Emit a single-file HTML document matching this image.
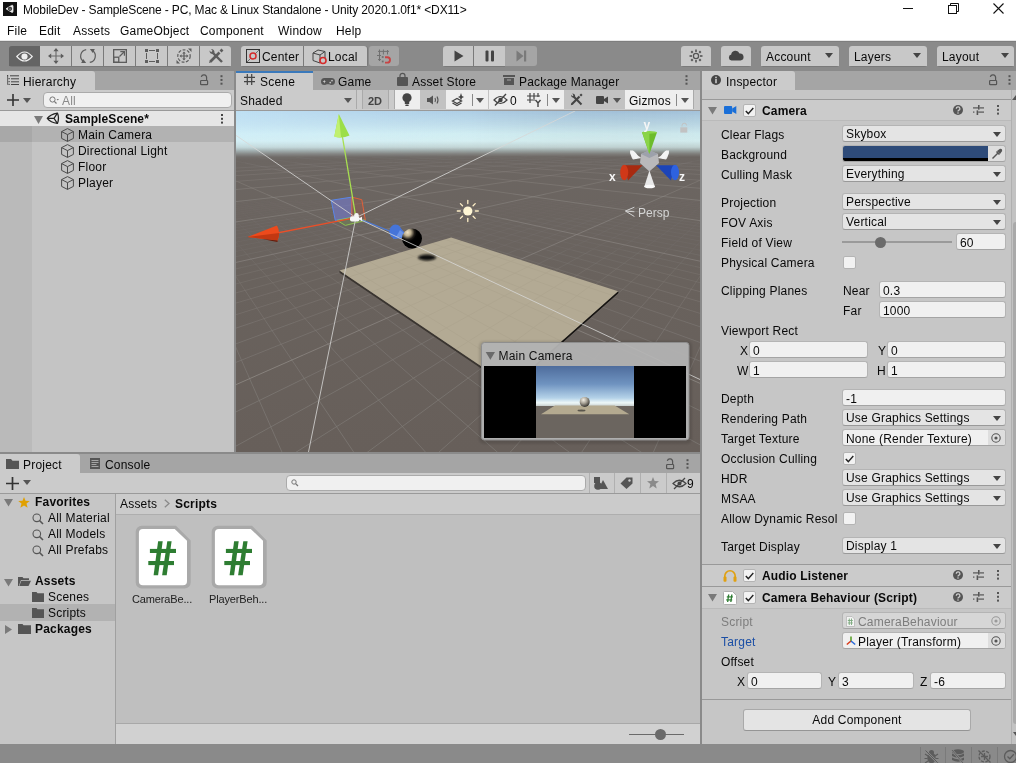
<!DOCTYPE html>
<html><head><meta charset="utf-8">
<style>
*{box-sizing:border-box;margin:0;padding:0}
html,body{width:1016px;height:763px;overflow:hidden;background:#c8c8c8;font-family:"Liberation Sans",sans-serif;font-size:12px;color:#090909}
.a{position:absolute}
.t{position:absolute;white-space:nowrap;line-height:14px;letter-spacing:0.2px;margin-top:1px;will-change:transform}
.b{font-weight:bold}
svg{position:absolute;overflow:visible}
</style></head><body>
<!-- title bar -->
<div class="a" style="left:0;top:0;width:1016px;height:41px;background:#fff"></div>

<!-- title -->
<div class="a" style="left:3px;top:2px;width:14px;height:14px;background:#111"></div>
<svg style="left:3px;top:2px" width="14" height="14" viewBox="0 0 14 14"><path d="M3 6.8 L8.6 3.4 Q10 2.7 10 4.3 V9.3 Q10 10.9 8.6 10.2 Z" fill="#eeeeee" stroke="#eeeeee" stroke-width="0.8" stroke-linejoin="round"/><circle cx="7" cy="6.8" r="2.1" fill="#1a1a1a"/><circle cx="7" cy="6.8" r="1" fill="none" stroke="#8a8a8a" stroke-width="0.8"/></svg>
<div class="t" style="left:23px;top:2px;letter-spacing:-0.15px">MobileDev - SampleScene - PC, Mac &amp; Linux Standalone - Unity 2020.1.0f1* &lt;DX11&gt;</div>
<div class="a" style="left:903px;top:8px;width:10px;height:1px;background:#111"></div>
<svg style="left:946px;top:2px" width="14" height="12" viewBox="0 0 14 12"><rect x="2.5" y="3.5" width="8" height="8" fill="none" stroke="#111"/><path d="M4.5 3.5 V1.5 H12.5 V9.5 H10.5" fill="none" stroke="#111"/></svg>
<svg style="left:993px;top:3px" width="11" height="11" viewBox="0 0 11 11"><path d="M0.5 0.5 L10.5 10.5 M10.5 0.5 L0.5 10.5" stroke="#111" stroke-width="1.1"/></svg>
<!-- menu -->
<div class="t" style="left:7px;top:23px">File</div>
<div class="t" style="left:39px;top:23px">Edit</div>
<div class="t" style="left:73px;top:23px">Assets</div>
<div class="t" style="left:120px;top:23px">GameObject</div>
<div class="t" style="left:200px;top:23px">Component</div>
<div class="t" style="left:278px;top:23px">Window</div>
<div class="t" style="left:336px;top:23px">Help</div>
<div class="a" style="left:0;top:40px;width:1016px;height:1px;background:#e6e6e6"></div>
<!-- toolbar -->
<div class="a" style="left:0;top:41px;width:1016px;height:30px;background:#8a8a8a"></div>

<!-- toolbar buttons -->
<div class="a" style="left:41px;top:0"></div>
<div class="a" style="left:0;top:41px;width:1016px;height:1px;background:#7e7e7e"></div>
<div class="a" style="left:9px;top:46px;width:222px;height:21px;background:#7a7a7a;border-radius:3px"></div>
<div class="a" style="left:9px;top:46px;width:31px;height:20px;background:#646464;border-radius:3px 0 0 0"></div>
<div class="a" style="left:40px;top:46px;width:31px;height:20px;background:#c8c8c8"></div>
<div class="a" style="left:72px;top:46px;width:31px;height:20px;background:#c8c8c8"></div>
<div class="a" style="left:104px;top:46px;width:31px;height:20px;background:#c8c8c8"></div>
<div class="a" style="left:136px;top:46px;width:31px;height:20px;background:#c8c8c8"></div>
<div class="a" style="left:168px;top:46px;width:31px;height:20px;background:#c8c8c8"></div>
<div class="a" style="left:200px;top:46px;width:31px;height:20px;background:#c8c8c8;border-radius:0 3px 0 0"></div>
<svg style="left:16px;top:50px" width="17" height="13" viewBox="0 0 17 13"><path d="M0.8 6.5 Q8.5 -2.5 16.2 6.5 Q8.5 15.5 0.8 6.5 Z" fill="none" stroke="#f0f0f0" stroke-width="1.2"/><circle cx="8.5" cy="6.5" r="3.1" fill="#f0f0f0"/></svg>
<svg style="left:47px;top:47px" width="18" height="18" viewBox="0 0 18 18"><path d="M9 3.5 V14.5 M3.5 9 H14.5" stroke="#6a6a6a" stroke-width="1.1"/><path d="M9 1 L11.6 4.2 H6.4 Z M9 17 L11.6 13.8 H6.4 Z M1 9 L4.2 6.4 V11.6 Z M17 9 L13.8 6.4 V11.6 Z" fill="#5c5c5c"/></svg>
<svg style="left:79px;top:48px" width="18" height="16" viewBox="0 0 18 16"><path d="M7.2 1.6 A6.6 6.6 0 0 0 4.6 13.6" fill="none" stroke="#5c5c5c" stroke-width="1.2"/><path d="M10.8 14.4 A6.6 6.6 0 0 0 13.4 2.4" fill="none" stroke="#5c5c5c" stroke-width="1.2"/><path d="M2.2 15 H7.2 L4.2 11 Z" fill="#5c5c5c"/><path d="M15.8 1 H10.8 L13.8 5 Z" fill="#5c5c5c"/></svg>
<svg style="left:113px;top:49px" width="14" height="14" viewBox="0 0 14 14"><rect x="0.65" y="0.65" width="12.7" height="12.7" fill="none" stroke="#5c5c5c" stroke-width="1.3"/><rect x="0.65" y="8.2" width="5.1" height="5.1" fill="none" stroke="#5c5c5c" stroke-width="1.3"/><path d="M6.5 7.5 L11 3" stroke="#5c5c5c" stroke-width="1.2"/><path d="M7.3 2.6 H11.4 V6.7" fill="none" stroke="#5c5c5c" stroke-width="1.2"/></svg>
<svg style="left:145px;top:49px" width="14" height="14" viewBox="0 0 14 14" fill="#5c5c5c"><rect x="0" y="0" width="3" height="3"/><rect x="11" y="0" width="3" height="3"/><rect x="0" y="11" width="3" height="3"/><rect x="11" y="11" width="3" height="3"/><path d="M4 1.5 H10 M4 12.5 H10 M1.5 4 V10 M12.5 4 V10" stroke="#5c5c5c" stroke-width="1"/></svg>
<svg style="left:176px;top:48px" width="16" height="16" viewBox="0 0 16 16"><circle cx="8" cy="8" r="6.2" fill="none" stroke="#5c5c5c" stroke-width="1.2" stroke-dasharray="3 1.5"/><path d="M8 3.5 L9.8 5.5 H6.2 Z M8 12.5 L9.8 10.5 H6.2 Z M3.5 8 L5.5 6.2 V9.8 Z M12.5 8 L10.5 6.2 V9.8 Z" fill="#5c5c5c"/><path d="M8 5 V11 M5 8 H11" stroke="#5c5c5c" stroke-width="1.2"/><path d="M15.5 0.5 V4 L12 0.5 Z M0.5 15.5 V12 L4 15.5 Z" fill="#5c5c5c"/></svg>
<svg style="left:208px;top:48px" width="16" height="16" viewBox="0 0 16 16"><path d="M2.5 13.5 L11.5 4.5" stroke="#5c5c5c" stroke-width="2.6"/><path d="M1 15 L2 11.8 L4.2 14 Z" fill="#5c5c5c"/><path d="M4.5 4.5 L14 14" stroke="#5c5c5c" stroke-width="2.4"/><path d="M1.5 2.5 Q1.5 6 5 6 L6.5 4.5 Q6.5 1 3 1 L4.5 2.8 L3.2 4.2 Z" fill="#5c5c5c"/><path d="M12.5 1.5 L14.5 3.5" stroke="#5c5c5c" stroke-width="2.6"/></svg>

<!-- center/local -->
<div class="a" style="left:241px;top:46px;width:127px;height:21px;background:#7a7a7a;border-radius:3px"></div>
<div class="a" style="left:241px;top:46px;width:62px;height:20px;background:#c8c8c8;border-radius:3px 0 0 0"></div>
<div class="a" style="left:304px;top:46px;width:63px;height:20px;background:#c8c8c8;border-radius:0 3px 0 0"></div>
<svg style="left:246px;top:49px" width="14" height="14" viewBox="0 0 14 14"><rect x="0.5" y="0.5" width="13" height="13" fill="none" stroke="#333" stroke-width="1"/><path d="M1 13 L13 1" stroke="#555" stroke-width="0.8"/><circle cx="7" cy="7" r="3" fill="#c8c8c8" stroke="#d42a2a" stroke-width="1.5"/></svg>
<div class="t" style="left:262px;top:49px">Center</div>
<svg style="left:312px;top:49px" width="17" height="16" viewBox="0 0 17 16"><path d="M1 4 L6 1 L13 2.5 V10 L8 14 L1 11.5 Z M1 4 L8 6 L13 2.5 M8 6 V14" fill="none" stroke="#444" stroke-width="1"/><circle cx="11" cy="11.5" r="3" fill="#c8c8c8" stroke="#d42a2a" stroke-width="1.6"/></svg>
<div class="t" style="left:328px;top:49px">Local</div>
<div class="a" style="left:369px;top:46px;width:30px;height:20px;background:#a5a5a5;border-radius:3px"></div>
<svg style="left:376px;top:49px" width="16" height="15" viewBox="0 0 16 15"><path d="M3.5 0.5 V12 M7.4 0.5 V5.5 M11.5 1 V5.5 M2 2.4 H13 M1 6.5 H5 M2 10.6 H5" stroke="#707070" stroke-width="1"/><rect x="5.8" y="7.1" width="1.8" height="1.8" fill="#707070"/><rect x="5.8" y="11.6" width="1.8" height="1.8" fill="#707070"/><path d="M9 8.2 H11.3 A2.7 2.7 0 0 1 11.3 13.6 H9" fill="none" stroke="#c84444" stroke-width="1.9"/></svg>

<!-- play -->
<div class="a" style="left:443px;top:46px;width:62px;height:21px;background:#7a7a7a;border-radius:3px 0 0 3px"></div>
<div class="a" style="left:443px;top:46px;width:30px;height:20px;background:#c8c8c8;border-radius:3px 0 0 0"></div>
<div class="a" style="left:474px;top:46px;width:31px;height:20px;background:#c8c8c8"></div>
<div class="a" style="left:505px;top:46px;width:32px;height:20px;background:#a5a5a5;border-radius:0 3px 3px 0"></div>
<svg style="left:454px;top:50px" width="10" height="12" viewBox="0 0 10 12"><path d="M0.5 0.5 L9.5 6 L0.5 11.5 Z" fill="#444"/></svg>
<svg style="left:485px;top:50px" width="10" height="12" viewBox="0 0 10 12"><rect x="0.5" y="0.5" width="3" height="11" rx="1" fill="#444"/><rect x="6" y="0.5" width="3" height="11" rx="1" fill="#444"/></svg>
<svg style="left:516px;top:50px" width="11" height="12" viewBox="0 0 11 12"><path d="M0.5 0.5 L7.5 6 L0.5 11.5 Z" fill="#7a7a7a"/><rect x="8" y="0.5" width="2.2" height="11" fill="#7a7a7a"/></svg>

<!-- right toolbar -->
<div class="a" style="left:681px;top:46px;width:30px;height:21px;background:#7a7a7a;border-radius:3px"></div>
<div class="a" style="left:681px;top:46px;width:30px;height:20px;background:#c8c8c8;border-radius:3px 3px 0 0"></div>
<svg style="left:688px;top:48px" width="16" height="16" viewBox="0 0 16 16" fill="#555"><circle cx="8" cy="8" r="2.6" fill="none" stroke="#555" stroke-width="1.3"/><rect x="7.2" y="1.5" width="1.6" height="2.5"/><rect x="7.2" y="12" width="1.6" height="2.5"/><rect x="1.5" y="7.2" width="2.5" height="1.6"/><rect x="12" y="7.2" width="2.5" height="1.6"/><rect x="3" y="3" width="2" height="2" transform="rotate(45 4 4)"/><rect x="11" y="3" width="2" height="2" transform="rotate(45 12 4)"/><rect x="3" y="11" width="2" height="2" transform="rotate(45 4 12)"/><rect x="11" y="11" width="2" height="2" transform="rotate(45 12 12)"/></svg>
<div class="a" style="left:721px;top:46px;width:30px;height:21px;background:#7a7a7a;border-radius:3px"></div>
<div class="a" style="left:721px;top:46px;width:30px;height:20px;background:#c8c8c8;border-radius:3px 3px 0 0"></div>
<svg style="left:728px;top:50px" width="16" height="11" viewBox="0 0 16 11"><path d="M3.5 10.5 A3 3 0 0 1 3.2 4.6 A4.3 4.3 0 0 1 11.5 3.5 A3.5 3.5 0 0 1 12.5 10.5 Z" fill="#444"/></svg>
<div class="a" style="left:761px;top:46px;width:78px;height:21px;background:#7a7a7a;border-radius:3px"></div>
<div class="a" style="left:761px;top:46px;width:78px;height:20px;background:#c8c8c8;border-radius:3px 3px 0 0"></div>
<div class="t" style="left:766px;top:49px">Account</div>
<svg style="left:825px;top:53px" width="8" height="5" viewBox="0 0 8 5"><path d="M0 0 H8 L4 5 Z" fill="#444"/></svg>
<div class="a" style="left:849px;top:46px;width:78px;height:21px;background:#7a7a7a;border-radius:3px"></div>
<div class="a" style="left:849px;top:46px;width:78px;height:20px;background:#c8c8c8;border-radius:3px 3px 0 0"></div>
<div class="t" style="left:854px;top:49px">Layers</div>
<svg style="left:913px;top:53px" width="8" height="5" viewBox="0 0 8 5"><path d="M0 0 H8 L4 5 Z" fill="#444"/></svg>
<div class="a" style="left:937px;top:46px;width:77px;height:21px;background:#7a7a7a;border-radius:3px"></div>
<div class="a" style="left:937px;top:46px;width:77px;height:20px;background:#c8c8c8;border-radius:3px 3px 0 0"></div>
<div class="t" style="left:942px;top:49px">Layout</div>
<svg style="left:1001px;top:53px" width="8" height="5" viewBox="0 0 8 5"><path d="M0 0 H8 L4 5 Z" fill="#444"/></svg>

<!-- dock tab bars -->
<div class="a" style="left:0;top:71px;width:234px;height:19px;background:#a5a5a5"></div>
<div class="a" style="left:236px;top:71px;width:464px;height:19px;background:#a5a5a5"></div>
<div class="a" style="left:702px;top:71px;width:314px;height:19px;background:#a5a5a5"></div>
<!-- hierarchy tab -->
<div class="a" style="left:0;top:71px;width:95px;height:19px;background:#cbcbcb;border-radius:0 3px 0 0"></div>
<svg style="left:7px;top:75px" width="12" height="10" viewBox="0 0 12 10" fill="#444"><rect x="0" y="0" width="1.2" height="1.2"/><rect x="3" y="0.3" width="9" height="1"/><rect x="1.5" y="3" width="1.2" height="1.2"/><rect x="4" y="3.3" width="8" height="1"/><rect x="1.5" y="6" width="1.2" height="1.2"/><rect x="4" y="6.3" width="8" height="1"/><rect x="1.5" y="8.8" width="1.2" height="1.2"/><rect x="4" y="9" width="8" height="1"/><rect x="0.3" y="1" width="0.8" height="8.8"/></svg>
<div class="t" style="left:23px;top:74px">Hierarchy</div>
<svg style="left:199px;top:74px" width="10" height="12" viewBox="0 0 10 12"><path d="M2.3 2.8 A2.7 2.7 0 0 1 7.6 3.4 V6.3" fill="none" stroke="#555" stroke-width="1.2"/><rect x="1.6" y="6.5" width="7" height="4.2" rx="0.8" fill="none" stroke="#555" stroke-width="1.2"/></svg>
<svg style="left:220px;top:74px" width="3" height="11" viewBox="0 0 3 11" fill="#555"><rect x="0.5" y="1.2" width="2" height="2"/><rect x="0.5" y="4.95" width="2" height="2"/><rect x="0.5" y="8.7" width="2" height="2"/></svg>
<!-- scene tabs -->
<div class="a" style="left:236px;top:71px;width:77px;height:19px;background:#cbcbcb;border-radius:0 3px 0 0"></div>
<div class="a" style="left:236px;top:71px;width:77px;height:2px;background:#3a79bb"></div>
<svg style="left:244px;top:74px" width="11" height="11" viewBox="0 0 11 11"><path d="M3.3 0 V11 M7.7 0 V11 M0 3.3 H11 M0 7.7 H11" stroke="#444" stroke-width="1.2"/></svg>
<div class="t" style="left:260px;top:74px">Scene</div>
<svg style="left:321px;top:78px" width="14" height="7" viewBox="0 0 14 7"><path d="M3.5 0 H10.5 A3.5 3.5 0 0 1 10.5 7 Q9 7 8.2 6.3 H5.8 Q5 7 3.5 7 A3.5 3.5 0 0 1 3.5 0 Z" fill="#555"/><path d="M3.3 1.8 L3.8 3.1 L5 3.6 L3.8 4.1 L3.3 5.4 L2.8 4.1 L1.6 3.6 L2.8 3.1 Z" fill="#c8c8c8"/><circle cx="9.2" cy="4.6" r="0.9" fill="#c0c0c0"/><circle cx="11" cy="2.6" r="0.9" fill="#c0c0c0"/></svg>
<div class="t" style="left:338px;top:74px">Game</div>
<svg style="left:397px;top:73px" width="11" height="13" viewBox="0 0 11 13"><path d="M3 4 V2.8 A2.5 2.5 0 0 1 8 2.8 V4" fill="none" stroke="#555" stroke-width="1.2"/><rect x="0" y="4" width="11" height="9" rx="1" fill="#555"/></svg>
<div class="t" style="left:412px;top:74px">Asset Store</div>
<svg style="left:503px;top:75px" width="12" height="10" viewBox="0 0 12 10" fill="#555"><rect x="0" y="0" width="12" height="2"/><path d="M1 3 H11 V10 H1 Z"/><rect x="4" y="4.5" width="4" height="1" fill="#a5a5a5"/></svg>
<div class="t" style="left:519px;top:74px">Package Manager</div>
<svg style="left:685px;top:74px" width="3" height="11" viewBox="0 0 3 11" fill="#555"><rect x="0.5" y="1.2" width="2" height="2"/><rect x="0.5" y="4.95" width="2" height="2"/><rect x="0.5" y="8.7" width="2" height="2"/></svg>
<!-- inspector tab -->
<div class="a" style="left:702px;top:71px;width:93px;height:19px;background:#cbcbcb;border-radius:0 3px 0 0"></div>
<svg style="left:711px;top:75px" width="10" height="10" viewBox="0 0 10 10"><circle cx="5" cy="5" r="5" fill="#444"/><rect x="4.2" y="4" width="1.6" height="4.2" fill="#cbcbcb"/><circle cx="5" cy="2.4" r="0.9" fill="#cbcbcb"/></svg>
<div class="t" style="left:726px;top:74px">Inspector</div>
<svg style="left:988px;top:74px" width="10" height="12" viewBox="0 0 10 12"><path d="M2.3 2.8 A2.7 2.7 0 0 1 7.6 3.4 V6.3" fill="none" stroke="#555" stroke-width="1.2"/><rect x="1.6" y="6.5" width="7" height="4.2" rx="0.8" fill="none" stroke="#555" stroke-width="1.2"/></svg>
<svg style="left:1008px;top:74px" width="3" height="11" viewBox="0 0 3 11" fill="#555"><rect x="0.5" y="1.2" width="2" height="2"/><rect x="0.5" y="4.95" width="2" height="2"/><rect x="0.5" y="8.7" width="2" height="2"/></svg>

<!-- hierarchy toolbar -->
<div class="a" style="left:0;top:90px;width:234px;height:20px;background:#cbcbcb"></div>
<div class="a" style="left:0;top:110px;width:234px;height:1px;background:#999"></div>
<svg style="left:7px;top:94px" width="12" height="12" viewBox="0 0 12 12"><path d="M6 0 V12 M0 6 H12" stroke="#333" stroke-width="1.6"/></svg>
<svg style="left:23px;top:98px" width="8" height="5" viewBox="0 0 8 5"><path d="M0 0 H8 L4 5 Z" fill="#555"/></svg>
<div class="a" style="left:43px;top:92px;width:189px;height:16px;background:#f0f0f0;border:1px solid #aaaaaa;border-radius:4px"></div>
<svg style="left:49px;top:96px" width="10" height="9" viewBox="0 0 10 9"><circle cx="3.5" cy="3.5" r="2.6" fill="none" stroke="#777" stroke-width="1"/><path d="M5.3 5.3 L7.5 7.5" stroke="#777" stroke-width="1.2"/><path d="M7.5 3 H10 L8.75 4.5 Z" fill="#777"/></svg>
<div class="t" style="left:62px;top:93px;color:#8a8a8a">All</div>

<!-- scene toolbar -->
<div class="a" style="left:236px;top:90px;width:464px;height:20px;background:#cbcbcb"></div>
<div class="a" style="left:236px;top:110px;width:464px;height:1px;background:#999"></div>
<div class="t" style="left:240px;top:93px">Shaded</div>
<svg style="left:344px;top:98px" width="8" height="5" viewBox="0 0 8 5"><path d="M0 0 H8 L4 5 Z" fill="#555"/></svg>
<div class="a" style="left:356px;top:90px;width:1px;height:19px;background:#aaa"></div>
<div class="a" style="left:362px;top:90px;width:1px;height:19px;background:#aaa"></div>
<div class="a" style="left:363px;top:90px;width:25px;height:19px;background:#c2c2c2"></div>
<div class="t b" style="left:368px;top:93px;color:#444;font-size:11px;letter-spacing:0">2D</div>
<div class="a" style="left:388px;top:90px;width:1px;height:19px;background:#aaa"></div>
<div class="a" style="left:394px;top:90px;width:1px;height:19px;background:#aaa"></div>
<div class="a" style="left:395px;top:90px;width:25px;height:19px;background:#eeeeee"></div>
<div class="a" style="left:420px;top:90px;width:26px;height:19px;background:#c2c2c2"></div>
<div class="a" style="left:446px;top:90px;width:42px;height:19px;background:#eeeeee"></div>
<div class="a" style="left:488px;top:90px;width:1px;height:19px;background:#c2c2c2"></div>
<div class="a" style="left:489px;top:90px;width:33px;height:19px;background:#eeeeee"></div>
<div class="a" style="left:522px;top:90px;width:42px;height:19px;background:#eeeeee"></div>
<div class="a" style="left:564px;top:90px;width:26px;height:19px;background:#c2c2c2"></div>
<div class="a" style="left:590px;top:90px;width:35px;height:19px;background:#c2c2c2"></div>
<div class="a" style="left:625px;top:90px;width:68px;height:19px;background:#eeeeee"></div>
<div class="a" style="left:693px;top:90px;width:1px;height:19px;background:#aaa"></div>
<!-- scene toolbar icons -->
<svg style="left:402px;top:93px" width="10" height="14" viewBox="0 0 10 14" fill="#444"><circle cx="5" cy="4.8" r="4.6"/><rect x="2.8" y="8" width="4.4" height="3"/><rect x="3.3" y="11.6" width="3.4" height="1.5" rx="0.7"/></svg>
<svg style="left:427px;top:95px" width="12" height="10" viewBox="0 0 12 10"><path d="M0 3 H2.5 L6 0.5 V9.5 L2.5 7 H0 Z" fill="#555"/><path d="M8 3 Q9 5 8 7 M10 1.5 Q12 5 10 8.5" fill="none" stroke="#555" stroke-width="1.1"/></svg>
<svg style="left:452px;top:93px" width="12" height="13" viewBox="0 0 12 13"><path d="M0.5 8 L5 5.5 L9.5 8 L5 10.5 Z" fill="none" stroke="#444" stroke-width="1.3"/><path d="M0.5 10 L5 12.5 L9.5 10" fill="none" stroke="#444" stroke-width="1.3"/><path d="M9 0 L10 3 L12 4 L10 5 L9 7.5 L8 5 L6 4 L8 3 Z" fill="#444"/></svg>
<div class="a" style="left:472px;top:94px;width:1px;height:12px;background:#888"></div>
<svg style="left:476px;top:98px" width="8" height="5" viewBox="0 0 8 5"><path d="M0 0 H8 L4 5 Z" fill="#555"/></svg>
<svg style="left:493px;top:93px" width="15" height="13" viewBox="0 0 15 13"><path d="M1 7 Q7.5 0 14 7 Q7.5 14 1 7 Z" fill="none" stroke="#444" stroke-width="1.2"/><circle cx="7.5" cy="7" r="2.2" fill="#444"/><path d="M2 12.5 L13 1" stroke="#444" stroke-width="1.4"/></svg>
<div class="t" style="left:510px;top:93px">0</div>
<svg style="left:527px;top:93px" width="15" height="14" viewBox="0 0 15 14"><path d="M3 0 V10 M7 0 V6 M11 0 V4 M0 3 H13 M0 7 H8" stroke="#444" stroke-width="1.2"/><path d="M8.5 7 L11 10 L13.5 7 M11 10 V14" fill="none" stroke="#444" stroke-width="1.4"/></svg>
<div class="a" style="left:547px;top:94px;width:1px;height:12px;background:#888"></div>
<svg style="left:552px;top:98px" width="8" height="5" viewBox="0 0 8 5"><path d="M0 0 H8 L4 5 Z" fill="#555"/></svg>
<svg style="left:570px;top:93px" width="13" height="13" viewBox="0 0 13 13"><path d="M2 11 L9.5 3.5" stroke="#444" stroke-width="2.2"/><path d="M0.8 12.2 L1.5 9.8 L3.2 11.5 Z" fill="#444"/><path d="M3.8 3.8 L11.5 11.5" stroke="#444" stroke-width="2"/><path d="M1 1.8 Q1 4.8 4 4.8 L5.2 3.6 Q5.2 0.6 2.2 0.6 L3.5 2.2 L2.4 3.2 Z" fill="#444"/><path d="M10.3 1.3 L11.8 2.8" stroke="#444" stroke-width="2.2"/></svg>
<svg style="left:596px;top:96px" width="12" height="8" viewBox="0 0 12 8" fill="#444"><rect x="0" y="0" width="8" height="8" rx="1"/><path d="M8 3 L12 0.5 V7.5 L8 5 Z"/></svg>
<svg style="left:613px;top:98px" width="8" height="5" viewBox="0 0 8 5"><path d="M0 0 H8 L4 5 Z" fill="#555"/></svg>
<div class="t" style="left:629px;top:93px">Gizmos</div>
<div class="a" style="left:676px;top:94px;width:1px;height:12px;background:#888"></div>
<svg style="left:681px;top:98px" width="8" height="5" viewBox="0 0 8 5"><path d="M0 0 H8 L4 5 Z" fill="#555"/></svg>

<!-- hierarchy content -->
<div class="a" style="left:32px;top:111px;width:202px;height:341px;background:#c4c4c4"></div>
<div class="a" style="left:0;top:111px;width:32px;height:341px;background:#bababa"></div>
<div class="a" style="left:0;top:111px;width:234px;height:15px;background:#e6e6e6"></div>
<div class="a" style="left:0;top:126px;width:32px;height:16px;background:#a8a8a8"></div>
<div class="a" style="left:32px;top:126px;width:202px;height:16px;background:#b2b2b2"></div>
<svg style="left:34px;top:116px" width="9" height="8" viewBox="0 0 9 8"><path d="M0 0 H9 L4.5 8 Z" fill="#7a7a7a"/></svg>
<svg style="left:46px;top:112px" width="14" height="13" viewBox="0 0 14 13"><path d="M1.3 6.4 Q4.5 2.2 11.4 1.1 Q13.6 6.25 11.4 11.4 Q4.5 10.6 1.3 6.4 Z" fill="none" stroke="#222" stroke-width="1.3" stroke-linejoin="round"/><path d="M1.3 6.4 H8 L11.4 1.1 M8 6.4 L11.4 11.4" fill="none" stroke="#222" stroke-width="1.2"/></svg>
<div class="t b" style="left:65px;top:111px;letter-spacing:0.1px">SampleScene*</div>
<svg style="left:221px;top:114px" width="3" height="11" viewBox="0 0 3 11" fill="#444"><rect x="0" y="0" width="2" height="2"/><rect x="0" y="3.8" width="2" height="2"/><rect x="0" y="7.6" width="2" height="2"/></svg>
<svg style="left:61px;top:128px" width="13" height="14" viewBox="0 0 13 14"><path d="M6.5 0.6 L12.4 3.6 V10.4 L6.5 13.4 L0.6 10.4 V3.6 Z M0.6 3.6 L6.5 6.6 L12.4 3.6 M6.5 6.6 V13.4" fill="none" stroke="#4a4a4a" stroke-width="1" stroke-linejoin="round"/></svg>
<div class="t" style="left:78px;top:127px">Main Camera</div>
<svg style="left:61px;top:144px" width="13" height="14" viewBox="0 0 13 14"><path d="M6.5 0.6 L12.4 3.6 V10.4 L6.5 13.4 L0.6 10.4 V3.6 Z M0.6 3.6 L6.5 6.6 L12.4 3.6 M6.5 6.6 V13.4" fill="none" stroke="#4a4a4a" stroke-width="1" stroke-linejoin="round"/></svg>
<div class="t" style="left:78px;top:143px">Directional Light</div>
<svg style="left:61px;top:160px" width="13" height="14" viewBox="0 0 13 14"><path d="M6.5 0.6 L12.4 3.6 V10.4 L6.5 13.4 L0.6 10.4 V3.6 Z M0.6 3.6 L6.5 6.6 L12.4 3.6 M6.5 6.6 V13.4" fill="none" stroke="#4a4a4a" stroke-width="1" stroke-linejoin="round"/></svg>
<div class="t" style="left:78px;top:159px">Floor</div>
<svg style="left:61px;top:176px" width="13" height="14" viewBox="0 0 13 14"><path d="M6.5 0.6 L12.4 3.6 V10.4 L6.5 13.4 L0.6 10.4 V3.6 Z M0.6 3.6 L6.5 6.6 L12.4 3.6 M6.5 6.6 V13.4" fill="none" stroke="#4a4a4a" stroke-width="1" stroke-linejoin="round"/></svg>
<div class="t" style="left:78px;top:175px">Player</div>
<!-- scene view -->
<svg style="left:236px;top:111px;overflow:hidden;will-change:transform" width="464" height="341" viewBox="236 111 464 341">
<defs>
<linearGradient id="sky" x1="0" y1="111" x2="0" y2="452" gradientUnits="userSpaceOnUse">
<stop offset="0" stop-color="#a9c9e2"/><stop offset="0.038" stop-color="#bedbe9"/><stop offset="0.067" stop-color="#d2eef2"/><stop offset="0.088" stop-color="#d6eff1"/><stop offset="0.106" stop-color="#c2d4d4"/><stop offset="0.117" stop-color="#9aa3a1"/><stop offset="0.126" stop-color="#7f7e7b"/><stop offset="0.135" stop-color="#6c6662"/><stop offset="0.5" stop-color="#69625d"/><stop offset="1" stop-color="#675f5a"/></linearGradient>
<linearGradient id="fade" x1="0" y1="111" x2="0" y2="452" gradientUnits="userSpaceOnUse"><stop offset="0.115" stop-color="#6c6763" stop-opacity="0"/><stop offset="0.13" stop-color="#6c6763" stop-opacity="0.85"/><stop offset="0.2" stop-color="#6c6763" stop-opacity="0.55"/><stop offset="0.45" stop-color="#6c6763" stop-opacity="0.2"/><stop offset="0.7" stop-color="#6c6763" stop-opacity="0"/></linearGradient>
<radialGradient id="ball" cx="0.28" cy="0.2" r="0.55"><stop offset="0" stop-color="#eee0c0"/><stop offset="0.3" stop-color="#bfb192"/><stop offset="0.62" stop-color="#221e19"/><stop offset="0.8" stop-color="#030303"/><stop offset="1" stop-color="#000"/></radialGradient>
<radialGradient id="pball" cx="0.38" cy="0.3" r="0.75"><stop offset="0" stop-color="#f4f0e6"/><stop offset="0.45" stop-color="#aaa498"/><stop offset="1" stop-color="#2a2824"/></radialGradient>
<linearGradient id="psky" x1="0" y1="366" x2="0" y2="406" gradientUnits="userSpaceOnUse"><stop offset="0" stop-color="#4e6c9c"/><stop offset="0.45" stop-color="#6f93c0"/><stop offset="0.8" stop-color="#b4d2e8"/><stop offset="0.92" stop-color="#eef8f8"/><stop offset="1" stop-color="#c8d0d0"/></linearGradient>
<linearGradient id="skyh" x1="236" y1="0" x2="700" y2="0" gradientUnits="userSpaceOnUse"><stop offset="0" stop-color="#cdeeff" stop-opacity="0.6"/><stop offset="0.5" stop-color="#cdeeff" stop-opacity="0.15"/><stop offset="1" stop-color="#000" stop-opacity="0.03"/></linearGradient>
<linearGradient id="skyv" x1="0" y1="111" x2="0" y2="160" gradientUnits="userSpaceOnUse"><stop offset="0" stop-color="#fff"/><stop offset="0.55" stop-color="#fff" stop-opacity="0.6"/><stop offset="1" stop-color="#fff" stop-opacity="0"/></linearGradient>
<mask id="skym"><rect x="236" y="111" width="464" height="50" fill="url(#skyv)"/></mask>
<filter id="blur1"><feGaussianBlur stdDeviation="1.2"/></filter>
<filter id="blur05"><feGaussianBlur stdDeviation="0.5"/></filter>
</defs>
<rect x="236" y="111" width="464" height="341" fill="url(#sky)"/>
<rect x="236" y="111" width="464" height="50" fill="url(#skyh)" mask="url(#skym)"/>
<g stroke-width="1" fill="none">
<path stroke="#7f7a76" stroke-opacity="0.1" d="M200.3 201.1L201.9 200.9M200.2 202.5L215.6 200.9M200.1 204.0L229.4 200.9M200.3 207.3L256.6 200.8M200.2 209.0L270.4 200.8M200.1 210.9L284.1 200.8M200.4 212.8L297.9 200.7M200.3 214.8L311.6 200.7M200.2 217.0L325.4 200.7M205.3 218.6L339.1 200.6M223.2 218.6L352.9 200.6M241.0 218.5L366.7 200.6M276.6 218.4L394.2 200.5M294.5 218.4L407.9 200.5M312.3 218.4L421.7 200.4M330.1 218.3L435.4 200.4M347.9 218.3L449.2 200.4M365.7 218.2L462.9 200.3M383.6 218.2L476.7 200.3M401.4 218.1L490.4 200.3M419.2 218.1L504.2 200.2M454.8 218.0L531.7 200.2M472.6 218.0L545.4 200.1M490.4 217.9L559.2 200.1M508.3 217.9L572.8 200.1M526.1 217.8L586.6 200.1M543.9 217.8L600.3 200.0M561.7 217.8L614.1 200.0M579.5 217.7L627.8 200.0M597.1 217.7L641.6 199.9M200.0 202.3L214.7 218.5M212.5 200.9L232.5 218.5M632.8 217.6L669.1 199.9M226.3 200.9L250.3 218.5M650.6 217.6L682.8 199.8M240.0 200.8L268.1 218.4M668.4 217.5L696.6 199.8M253.8 200.8L285.9 218.4M686.2 217.5L710.3 199.8M267.6 200.8L303.7 218.3M704.0 217.5L724.0 199.7M721.8 217.4L737.8 199.7M295.1 200.7L339.3 218.2M739.6 217.4L740.0 216.8M308.9 200.7L357.1 218.2M322.6 200.7L374.9 218.2M336.4 200.6L392.7 218.1M350.2 200.6L410.5 218.1M363.9 200.6L428.4 218.0M377.7 200.5L446.2 218.0M391.4 200.5L464.0 217.9M405.2 200.5L481.8 217.9M432.7 200.4L517.3 217.8M446.4 200.4L535.1 217.8M460.2 200.3L552.9 217.7M473.9 200.3L570.7 217.7M487.7 200.3L588.8 217.7M501.4 200.2L606.6 217.6M515.2 200.2L624.4 217.6M528.9 200.2L642.2 217.6M542.7 200.1L660.0 217.5M570.4 200.1L695.6 217.4M584.2 200.1L713.4 217.4M597.9 200.0L731.2 217.3M611.7 200.0L739.6 216.1M625.4 200.0L739.8 214.0M639.2 199.9L739.6 211.9M652.9 199.9L739.8 209.9M666.7 199.9L740.0 208.1M680.4 199.8L739.8 206.3M707.9 199.8L739.8 203.1M721.6 199.7L740.0 201.6M735.4 199.7L739.8 200.1"/>
<path stroke="#7f7a76" stroke-opacity="0.2" d="M200.0 219.3L205.3 218.6M200.3 221.7L223.2 218.6M200.2 224.4L241.0 218.5M200.5 230.1L276.6 218.4M200.3 233.3L294.5 218.4M200.2 236.7L312.3 218.4M200.1 240.4L330.1 218.3M200.5 244.4L347.9 218.3M200.3 248.7L365.7 218.2M212.3 251.1L383.6 218.2M237.6 251.0L401.4 218.1M262.9 251.0L419.2 218.1M313.5 250.8L454.8 218.0M338.8 250.8L472.6 218.0M364.1 250.7L490.4 217.9M389.3 250.6L508.3 217.9M414.6 250.6L526.1 217.8M439.9 250.5L543.9 217.8M465.2 250.4L561.7 217.8M490.5 250.4L579.5 217.7M200.0 223.3L218.6 251.0M515.7 250.3L597.1 217.7M214.7 218.5L243.8 250.9M232.5 218.5L269.1 250.8M566.3 250.2L632.8 217.6M250.3 218.5L294.4 250.8M591.5 250.1L650.6 217.6M268.1 218.4L319.6 250.7M616.8 250.1L668.4 217.5M285.9 218.4L344.9 250.6M641.9 250.1L686.2 217.5M303.7 218.3L370.2 250.6M667.2 250.1L704.0 217.5M692.5 250.0L721.8 217.4M339.3 218.2L420.7 250.5M717.7 249.9L739.6 217.4M357.1 218.2L445.9 250.4M374.9 218.2L471.2 250.3M392.7 218.1L496.4 250.3M410.5 218.1L521.7 250.2M428.4 218.0L546.9 250.1M446.2 218.0L572.2 250.1M464.0 217.9L597.4 250.0M481.8 217.9L623.1 250.1M517.3 217.8L673.6 249.9M535.1 217.8L698.9 249.9M552.9 217.7L724.1 249.8M570.7 217.7L739.5 248.0M588.8 217.7L739.8 243.7M606.6 217.6L739.5 239.6M624.4 217.6L739.8 236.0M642.2 217.6L739.6 232.5M660.0 217.5L739.8 229.3M695.6 217.4L739.8 223.5M713.4 217.4L739.6 220.9M731.2 217.3L739.8 218.5"/>
<path stroke="#7f7a76" stroke-opacity="0.3" d="M200.2 253.4L212.3 251.1M200.0 258.6L237.6 251.0M200.5 264.1L262.9 251.0M241.4 267.6L313.5 250.8M270.5 267.5L338.8 250.8M299.6 267.4L364.1 250.7M328.7 267.3L389.3 250.6M357.3 267.4L414.6 250.6M386.4 267.3L439.9 250.5M415.5 267.3L465.2 250.4M200.0 266.3L200.6 267.5M444.7 267.2L490.5 250.4M218.6 251.0L229.7 267.5M473.8 267.1L515.7 250.3M243.8 250.9L258.7 267.4M269.1 250.8L287.8 267.3M532.0 267.0L566.3 250.2M294.4 250.8L316.9 267.2M561.1 266.9L591.5 250.1M319.6 250.7L345.9 267.2M590.2 266.8L616.8 250.1M344.9 250.6L375.2 267.2M619.3 266.8L641.9 250.1M370.2 250.6L404.3 267.2M648.4 266.7L667.2 250.1M677.5 266.6L692.5 250.0M420.7 250.5L462.5 267.0M706.6 266.5L717.7 249.9M445.9 250.4L491.6 266.9M735.7 266.5L740.0 256.7M471.2 250.3L520.7 266.9M496.4 250.3L549.7 266.8M521.7 250.2L578.8 266.7M546.9 250.1L607.9 266.6M572.2 250.1L636.9 266.6M597.4 250.0L666.0 266.5M623.1 250.1L695.0 266.4M673.6 249.9L739.8 263.5M698.9 249.9L739.5 257.8M724.1 249.8L739.8 252.7"/>
<path stroke="#7f7a76" stroke-opacity="0.4" d="M200.1 277.1L241.4 267.6M200.7 284.6L270.5 267.5M211.5 290.3L299.6 267.4M245.8 290.2L328.7 267.3M280.1 290.1L357.3 267.4M314.4 290.0L386.4 267.3M348.7 289.9L415.5 267.3M200.6 267.5L210.5 290.1M383.0 289.8L444.7 267.2M229.7 267.5L244.8 290.0M417.3 289.7L473.8 267.1M258.7 267.4L279.1 289.9M287.8 267.3L313.3 289.8M485.8 289.6L532.0 267.0M316.9 267.2L347.6 289.7M520.1 289.5L561.1 266.9M345.9 267.2L381.8 289.6M554.4 289.4L590.2 266.8M375.2 267.2L416.1 289.6M588.7 289.3L619.3 266.8M404.3 267.2L450.3 289.5M622.9 289.2L648.4 266.7M657.2 289.1L677.5 266.6M462.5 267.0L518.8 289.3M691.4 289.0L706.6 266.5M491.6 266.9L553.0 289.2M725.7 289.0L735.7 266.5M520.7 266.9L587.2 289.1M549.7 266.8L621.4 289.0M578.8 266.7L655.7 288.9M607.9 266.6L689.9 288.9M636.9 266.6L724.1 288.8M666.0 266.5L739.4 284.1M695.0 266.4L739.8 276.6"/>
<path stroke="#7f7a76" stroke-opacity="0.5" d="M200.5 293.1L211.5 290.3M200.3 302.7L245.8 290.2M200.1 313.6L280.1 290.1M211.2 322.5L314.4 290.0M253.0 322.4L348.7 289.9M210.5 290.1L224.7 322.1M294.7 322.3L383.0 289.8M244.8 290.0L266.3 322.0M336.4 322.1L417.3 289.7M279.1 289.9L308.0 321.9M313.3 289.8L349.6 321.8M419.8 321.9L485.8 289.6M347.6 289.7L391.2 321.7M460.9 322.1L520.1 289.5M381.8 289.6L433.3 321.9M502.7 322.0L554.4 289.4M416.1 289.6L475.0 321.8M544.4 321.9L588.7 289.3M450.3 289.5L516.7 321.7M586.1 321.8L622.9 289.2M627.9 321.7L657.2 289.1M518.8 289.3L600.0 321.5M669.6 321.6L691.4 289.0M553.0 289.2L641.7 321.3M711.3 321.5L725.7 289.0M587.2 289.1L683.3 321.2M621.4 289.0L725.0 321.1M655.7 288.9L739.8 313.3M689.9 288.9L739.4 302.3M724.1 288.8L739.8 292.8"/>
<path stroke="#7f7a76" stroke-opacity="0.6" d="M200.8 325.8L211.2 322.5M200.5 340.1L253.0 322.4M224.7 322.1L248.1 375.2M200.2 356.9L294.7 322.3M266.3 322.0L301.9 375.0M202.4 375.8L336.4 322.1M308.0 321.9L355.8 374.9M349.6 321.8L410.1 375.2M310.3 375.5L419.8 321.9M391.2 321.7L464.1 375.1M364.3 375.4L460.9 322.1M433.3 321.9L518.0 374.9M417.4 375.7L502.7 322.0M475.0 321.8L571.9 374.8M471.5 375.6L544.4 321.9M516.7 321.7L625.8 374.6M525.5 375.4L586.1 321.8M579.5 375.3L627.9 321.7M600.0 321.5L733.6 374.4M633.6 375.1L669.6 321.6M641.7 321.3L739.2 356.7M687.6 375.0L711.3 321.5M683.3 321.2L739.8 340.1M725.0 321.1L739.3 325.6"/>
<path stroke="#7f7a76" stroke-opacity="0.7" d="M200.0 403.1L216.1 479.4M248.1 375.2L293.9 479.2M301.9 375.0L371.7 478.9M201.2 376.3L202.4 375.8M355.8 374.9L449.5 478.7M410.1 375.2L527.2 478.5M200.6 429.2L310.3 375.5M464.1 375.1L604.9 478.3M200.2 465.8L364.3 375.4M518.0 374.9L682.6 478.1M253.1 479.3L417.4 375.7M571.9 374.8L738.9 466.1M330.9 479.1L471.5 375.6M625.8 374.6L739.8 430.0M407.5 479.9L525.5 375.4M485.5 479.6L579.5 375.3M733.6 374.4L739.8 376.8M563.4 479.4L633.6 375.1M641.4 479.2L687.6 375.0M719.3 479.0L739.9 382.4"/>
<path stroke="#7f7a76" stroke-opacity="0.8" d="M371.7 478.9L372.4 480.0M449.5 478.7L450.4 479.7M527.2 478.5L528.3 479.5M604.9 478.3L606.3 479.3M682.6 478.1L684.2 479.1M719.1 480.0L719.3 479.0"/>
<path stroke="#8e8985" stroke-opacity="0.1" d="M342.3 162.6L451.1 157.0M392.3 162.4L489.0 156.9M442.3 162.3L526.9 156.9M492.3 162.2L564.8 156.8M542.3 162.1L602.7 156.7M592.2 162.0L640.6 156.6M642.2 161.9L678.4 156.5M692.2 161.7L716.3 156.4M220.4 157.6L244.5 162.8M258.3 157.5L294.6 162.7M296.3 157.4L344.6 162.5M334.2 157.3L394.6 162.4M372.1 157.2L444.6 162.3M410.0 157.1L494.7 162.2M448.0 157.0L544.7 162.1M485.9 157.0L594.8 162.0M523.9 156.9L644.8 161.9"/>
<path stroke="#8e8985" stroke-opacity="0.2" d="M206.1 169.5L342.3 162.6M271.2 169.3L392.3 162.4M336.4 169.2L442.3 162.3M401.4 169.0L492.3 162.2M466.6 168.9L542.3 162.1M531.7 168.7L592.2 162.0M596.9 168.6L642.2 161.9M662.0 168.4L692.2 161.7M727.1 168.3L740.0 162.6M200.0 165.3L209.5 169.4M244.5 162.8L274.7 169.3M294.6 162.7L339.9 169.1M344.6 162.5L405.1 169.0M394.6 162.4L470.3 168.8M444.6 162.3L535.5 168.7M494.7 162.2L600.7 168.5M544.7 162.1L665.8 168.4M594.8 162.0L731.1 168.2M644.8 161.9L739.9 165.8"/>
<path stroke="#8e8985" stroke-opacity="0.3" d="M200.0 169.8L206.1 169.5M200.0 173.3L271.2 169.3M200.1 177.9L336.4 169.2M231.8 181.7L401.4 169.0M325.2 181.5L466.6 168.9M418.7 181.3L531.7 168.7M512.1 181.1L596.9 168.6M605.6 180.9L662.0 168.4M699.0 180.7L727.1 168.3M209.5 169.4L237.6 181.7M274.7 169.3L331.2 181.5M339.9 169.1L424.7 181.3M405.1 169.0L518.2 181.1M470.3 168.8L611.7 180.8M535.5 168.7L705.3 180.6M600.7 168.5L739.9 176.9M665.8 168.4L739.9 172.3M731.1 168.2L739.9 168.7"/>
<path stroke="#8e8985" stroke-opacity="0.4" d="M200.2 184.1L231.8 181.7M200.2 192.7L325.2 181.5M300.8 194.4L418.7 181.3M423.7 194.1L512.1 181.1M546.7 193.8L605.6 180.9M669.7 193.6L699.0 180.7M237.6 181.7L266.9 194.5M331.2 181.5L389.9 194.2M424.7 181.3L513.0 193.9M518.2 181.1L636.0 193.6M611.7 180.8L740.0 191.7M705.3 180.6L739.9 183.1"/>
<path stroke="#8e8985" stroke-opacity="0.5" d="M200.0 205.6L300.8 194.4M253.6 219.3L423.7 194.1M433.6 218.8L546.7 193.8M613.4 218.4L669.7 193.6M266.9 194.5L323.2 219.0M389.9 194.2L503.0 218.6M513.0 193.9L683.0 218.2M636.0 193.6L740.0 204.7"/>
<path stroke="#8e8985" stroke-opacity="0.6" d="M200.1 227.2L253.6 219.3M226.9 264.4L433.6 218.8M510.5 263.7L613.4 218.4M323.2 219.0L425.8 263.8M503.0 218.6L708.9 263.1M683.0 218.2L739.6 226.3"/>
<path stroke="#8e8985" stroke-opacity="0.7" d="M200.3 270.3L226.9 264.4M303.2 355.0L510.5 263.7M425.8 263.8L633.0 354.1M708.9 263.1L739.5 269.7"/>
<path stroke="#8e8985" stroke-opacity="0.8" d="M200.9 400.1L303.2 355.0M633.0 354.1L739.1 400.4"/>
</g>
<!-- floor -->
<polygon points="339.5,270.5 510.8,386.2 618.1,291.3 618.1,293.5 510.8,388.4 339.5,272.7" fill="#3a3530"/>
<polyline points="510.8,387.0 618.1,292.1" fill="none" stroke="#161412" stroke-width="1.7"/>
<polygon points="339.5,270.5 451.2,237.6 618.1,291.3 510.8,386.2" fill="#b3aa94"/>
<g stroke="#9f9782" stroke-width="0.8" fill="none" opacity="0.3">
<line x1="349.8" y1="267.4" x2="522.7" y2="375.7"/>
<line x1="369.2" y1="261.7" x2="543.7" y2="357.2"/>
<line x1="386.9" y1="256.5" x2="561.6" y2="341.3"/>
<line x1="403.2" y1="251.7" x2="577.1" y2="327.6"/>
<line x1="418.3" y1="247.3" x2="590.7" y2="315.6"/>
<line x1="432.2" y1="243.2" x2="602.6" y2="305.0"/>
<line x1="445.1" y1="239.4" x2="613.2" y2="295.6"/>
<line x1="349.0" y1="276.9" x2="462.4" y2="241.2"/>
<line x1="359.6" y1="284.0" x2="474.5" y2="245.1"/>
<line x1="371.3" y1="291.9" x2="487.5" y2="249.3"/>
<line x1="384.3" y1="300.7" x2="501.5" y2="253.8"/>
<line x1="399.0" y1="310.6" x2="516.8" y2="258.7"/>
<line x1="415.5" y1="321.8" x2="533.4" y2="264.1"/>
<line x1="434.4" y1="334.5" x2="551.6" y2="269.9"/>
<line x1="456.0" y1="349.2" x2="571.6" y2="276.3"/>
<line x1="481.2" y1="366.2" x2="593.6" y2="283.4"/>
</g>

<!-- shadow -->
<ellipse cx="427" cy="257.5" rx="9" ry="3" fill="#0a0a0a" filter="url(#blur1)"/>
<!-- gizmo plane handles -->
<polygon points="331.2,200.3 351.8,197.1 351.8,217.4 335.3,220.4" fill="#7175b8" fill-opacity="0.75" stroke="#5a86e8" stroke-width="1"/>
<polygon points="351.8,197.1 361.8,199.7 365.4,220.4 351.8,217.4" fill="#8a5e50" fill-opacity="0.6" stroke="#e0603a" stroke-width="1"/>
<polygon points="337,220.4 351.8,217.4 365.4,220.4 345.3,225.4" fill="#6f7a58" fill-opacity="0.7" stroke="#8cc050" stroke-width="1"/>
<!-- axes -->
<line x1="355.9" y1="217.6" x2="342.3" y2="136" stroke="#a8e050" stroke-width="1.3"/>
<line x1="355.9" y1="217.6" x2="277" y2="233" stroke="#e8502a" stroke-width="1.3"/>
<line x1="355.9" y1="217.6" x2="392" y2="232" stroke="#4a78d8" stroke-width="1.3"/>
<path d="M338.8,114 L349.5,135.5 Q342,139 334.3,136.5 Z" fill="#9cde48"/>
<path d="M338.8,114 L341,137.5 Q336,137.5 334.3,136.5 Z" fill="#c0f070"/>
<path d="M247.5,237 L277,225.5 Q281,233 277.5,240.5 Z" fill="#ec4a1c"/>
<path d="M247.5,237 L277.5,240.5 Q279.5,236 279,233 Z" fill="#c23812"/>
<path d="M262,239 L277.5,240.5 L277.5,242 Z" fill="#6a1a08"/>
<path d="M409,237.5 L397.5,224.8 L393,239 Z" fill="#4a7ade"/>
<ellipse cx="395.5" cy="231.6" rx="6.3" ry="7" fill="#4574d8"/>
<path d="M409,237.5 L400,230 L396,237 Z" fill="#6a94ea"/>
<!-- ball -->
<circle cx="412" cy="238.5" r="10" fill="url(#ball)"/>
<!-- frustum lines -->
<g stroke="#d8d8d6" stroke-width="0.9" stroke-opacity="0.9" fill="none">
<line x1="236" y1="135.4" x2="355.9" y2="217.6"/>
<line x1="355.9" y1="217.6" x2="575" y2="111"/>
<line x1="355.9" y1="217.6" x2="308.5" y2="452"/>
<line x1="355.9" y1="217.6" x2="700" y2="379.5"/>
</g>
<!-- camera icon -->
<rect x="350" y="216.2" width="9.5" height="5.3" rx="2" fill="#f6f6f6"/>
<circle cx="356.5" cy="215.3" r="2.3" fill="#f6f6f6"/>
<path d="M358.5,218.5 L362,216.8 V221.3 Z" fill="#f6f6f6"/>
<!-- sun -->
<g stroke="#fff0c8" stroke-width="1.3" stroke-linecap="round">
<line x1="467.8" y1="200.5" x2="467.8" y2="203.5"/><line x1="467.8" y1="218.5" x2="467.8" y2="221.5"/>
<line x1="457.3" y1="211" x2="460.3" y2="211"/><line x1="475.3" y1="211" x2="478.3" y2="211"/>
<line x1="460.4" y1="203.6" x2="462.5" y2="205.7"/><line x1="473.1" y1="216.3" x2="475.2" y2="218.4"/>
<line x1="475.2" y1="203.6" x2="473.1" y2="205.7"/><line x1="462.5" y1="216.3" x2="460.4" y2="218.4"/>
</g>
<circle cx="467.8" cy="211" r="4.6" fill="#fff6d4"/>
<!-- scene orientation gizmo -->
<path d="M630,150 Q631,158 633,159.5 L641.5,158 Z" fill="#eeeeee"/>
<ellipse cx="634" cy="154.5" rx="2.5" ry="5" transform="rotate(-40 634 154.5)" fill="#f4f4f4"/>
<path d="M669.2,150 Q668,158 666,159.5 L657.5,158 Z" fill="#eeeeee"/>
<ellipse cx="665" cy="154.5" rx="2.5" ry="5" transform="rotate(40 665 154.5)" fill="#f4f4f4"/>
<path d="M644.2,187 L649.4,170.5 L655,187 Z" fill="#e8e8e8"/>
<ellipse cx="649.6" cy="186.5" rx="5.4" ry="1.8" fill="#fafafa"/>
<path d="M641,154 L649.4,150.5 L658,154 L659,163 L649.4,171.5 L640,163 Z" fill="#b9b9bb"/>
<path d="M641,154 L649.4,150.5 L658,154 L649.4,158 Z" fill="#9da1ab"/>
<path d="M642,132.2 L657,132.2 L649.4,154 Z" fill="#6cbc2c"/>
<path d="M642,132.2 L649.4,132.2 L649.4,154 Z" fill="#8ad448"/>
<ellipse cx="649.5" cy="132.4" rx="7.5" ry="1.3" fill="#8ad448"/>
<path d="M624.5,165.3 L642.5,165.3 L628,180.6 Z" fill="#a82a10"/>
<ellipse cx="624.2" cy="172.5" rx="4" ry="7.8" fill="#d03818"/>
<path d="M656.1,165.3 L674.5,165.3 L671,180.6 Z" fill="#1c44b8"/>
<ellipse cx="675" cy="172.5" rx="4" ry="7.8" fill="#2e62e0"/>
<text x="643.5" y="128.5" font-family="Liberation Sans" font-size="12" font-weight="bold" fill="#f6f6f6">y</text>
<text x="609" y="180.5" font-family="Liberation Sans" font-size="12" font-weight="bold" fill="#f6f6f6">x</text>
<text x="679" y="180.5" font-family="Liberation Sans" font-size="12" font-weight="bold" fill="#f6f6f6">z</text>
<path d="M682,126.5 V125.5 A2.3 2.3 0 0 1 686.6 125.5" fill="none" stroke="#c2c2c2" stroke-width="1"/>
<rect x="680.3" y="127.3" width="7" height="5.3" fill="#c2c2c2"/>
<!-- persp label -->
<path d="M634.4,207.2 L625.5,211 L634.4,216.5 M625.5,211 L634.4,211.8" fill="none" stroke="#d4d4d4" stroke-width="1"/>
<text x="638" y="216.5" font-family="Liberation Sans" font-size="12" fill="#d4d4d4">Persp</text>
<!-- preview window -->
<rect x="479" y="341" width="213" height="103" rx="5" fill="#000" fill-opacity="0.12" filter="url(#blur1)"/>
<rect x="481.5" y="342.5" width="207.5" height="97.5" rx="3" fill="#b3b3b3" fill-opacity="0.95" stroke="#8e8e8e" stroke-width="1"/>
<path d="M485.7,352 H495 L490.35,359.7 Z" fill="#6a6a6a"/>
<text x="498.5" y="360.2" font-family="Liberation Sans" font-size="12" letter-spacing="0.2" fill="#111">Main Camera</text>
<rect x="484" y="366" width="202" height="72" fill="#000"/>
<rect x="536" y="366" width="98" height="72" fill="#6b655f"/>
<rect x="536" y="366" width="98" height="40" fill="url(#psky)"/>
<polygon points="555,405.6 614.6,405.6 629.3,414.2 541,414.2" fill="#b4aa90"/>
<ellipse cx="581.5" cy="410.5" rx="4" ry="1.1" fill="#222" fill-opacity="0.6" filter="url(#blur05)"/>
<circle cx="584.7" cy="401.9" r="5" fill="url(#pball)"/>
</svg>
<!-- /scene view -->

<!-- project panel -->
<div class="a" style="left:0;top:454px;width:700px;height:19px;background:#a5a5a5"></div>
<div class="a" style="left:0;top:454px;width:80px;height:19px;background:#cbcbcb;border-radius:0 3px 0 0"></div>
<svg style="left:6px;top:459px" width="13" height="10" viewBox="0 0 13 10"><path d="M0 0 H5 L6.5 1.8 H13 V10 H0 Z" fill="#555"/></svg>
<div class="t" style="left:23px;top:457px">Project</div>
<svg style="left:90px;top:458px" width="10" height="11" viewBox="0 0 10 11"><rect x="0" y="0" width="10" height="11" fill="#555"/><path d="M1.5 2.5 H8.5 M1.5 4.5 H8.5 M1.5 6.5 H6.5 M1.5 8.5 H8.5" stroke="#a5a5a5" stroke-width="1"/></svg>
<div class="t" style="left:105px;top:457px">Console</div>
<svg style="left:665px;top:458px" width="10" height="12" viewBox="0 0 10 12"><path d="M2.3 2.8 A2.7 2.7 0 0 1 7.6 3.4 V6.3" fill="none" stroke="#555" stroke-width="1.2"/><rect x="1.6" y="6.5" width="7" height="4.2" rx="0.8" fill="none" stroke="#555" stroke-width="1.2"/></svg>
<svg style="left:686px;top:458px" width="3" height="11" viewBox="0 0 3 11" fill="#555"><rect x="0.5" y="1.2" width="2" height="2"/><rect x="0.5" y="4.95" width="2" height="2"/><rect x="0.5" y="8.7" width="2" height="2"/></svg>
<!-- project toolbar -->
<div class="a" style="left:0;top:473px;width:700px;height:20px;background:#cbcbcb"></div>
<div class="a" style="left:0;top:493px;width:700px;height:1px;background:#9a9a9a"></div>
<svg style="left:6px;top:477px" width="13" height="13" viewBox="0 0 13 13"><path d="M6.5 0 V13 M0 6.5 H13" stroke="#333" stroke-width="1.7"/></svg>
<svg style="left:23px;top:480px" width="8" height="5" viewBox="0 0 8 5"><path d="M0 0 H8 L4 5 Z" fill="#555"/></svg>
<div class="a" style="left:286px;top:475px;width:300px;height:16px;background:#f0f0f0;border:1px solid #aaaaaa;border-radius:4px"></div>
<svg style="left:291px;top:479px" width="8" height="8" viewBox="0 0 8 8"><circle cx="3" cy="3" r="2.2" fill="none" stroke="#777" stroke-width="1"/><path d="M4.6 4.6 L7 7" stroke="#777" stroke-width="1.3"/></svg>
<div class="a" style="left:589px;top:473px;width:1px;height:20px;background:#b0b0b0"></div>
<div class="a" style="left:614px;top:473px;width:1px;height:20px;background:#b0b0b0"></div>
<div class="a" style="left:640px;top:473px;width:1px;height:20px;background:#b0b0b0"></div>
<div class="a" style="left:666px;top:473px;width:1px;height:20px;background:#b0b0b0"></div>
<svg style="left:594px;top:477px" width="14" height="13" viewBox="0 0 14 13" fill="#555"><rect x="0" y="0" width="6" height="6"/><circle cx="4" cy="9" r="3.8"/><path d="M9 3 L14 12 H4.5 Z"/></svg>
<svg style="left:620px;top:477px" width="13" height="12" viewBox="0 0 13 12"><path d="M0.5 6.5 L6.5 0.5 H12.5 V6.5 L6.5 12 Z" fill="#555"/><circle cx="9.5" cy="3.5" r="1.2" fill="#cbcbcb"/></svg>
<svg style="left:647px;top:477px" width="12" height="12" viewBox="0 0 12 12"><path d="M6 0 L7.6 4 L12 4.2 L8.6 7 L9.7 11.5 L6 9 L2.3 11.5 L3.4 7 L0 4.2 L4.4 4 Z" fill="#8a8a8a"/></svg>
<svg style="left:672px;top:477px" width="15" height="13" viewBox="0 0 15 13"><path d="M1 6.5 Q7.5 0 14 6.5 Q7.5 13 1 6.5 Z" fill="none" stroke="#444" stroke-width="1.2"/><circle cx="7.5" cy="6.5" r="2" fill="#444"/><path d="M2 12 L13 1" stroke="#444" stroke-width="1.3"/></svg>
<div class="t" style="left:687px;top:476px">9</div>
<!-- project tree -->
<div class="a" style="left:0;top:494px;width:115px;height:250px;background:#c6c6c6"></div>
<div class="a" style="left:115px;top:494px;width:1px;height:250px;background:#a0a0a0"></div>
<div class="a" style="left:0;top:604px;width:115px;height:17px;background:#b2b2b2"></div>
<svg style="left:4px;top:499px" width="9" height="8" viewBox="0 0 9 8"><path d="M0 0 H9 L4.5 7.5 Z" fill="#7a7a7a"/></svg>
<svg style="left:18px;top:497px" width="12" height="11" viewBox="0 0 12 11"><path d="M6 0 L7.5 3.8 L11.8 4 L8.5 6.6 L9.6 10.8 L6 8.4 L2.4 10.8 L3.5 6.6 L0.2 4 L4.5 3.8 Z" fill="#e0a000"/></svg>
<div class="t b" style="left:35px;top:494px">Favorites</div>
<svg style="left:32px;top:513px" width="12" height="12" viewBox="0 0 12 12"><circle cx="4.8" cy="4.8" r="3.8" fill="none" stroke="#555" stroke-width="1.1"/><path d="M7.5 7.5 L11 11" stroke="#555" stroke-width="1.6"/></svg>
<div class="t" style="left:48px;top:510px">All Material</div>
<svg style="left:32px;top:529px" width="12" height="12" viewBox="0 0 12 12"><circle cx="4.8" cy="4.8" r="3.8" fill="none" stroke="#555" stroke-width="1.1"/><path d="M7.5 7.5 L11 11" stroke="#555" stroke-width="1.6"/></svg>
<div class="t" style="left:48px;top:526px">All Models</div>
<svg style="left:32px;top:545px" width="12" height="12" viewBox="0 0 12 12"><circle cx="4.8" cy="4.8" r="3.8" fill="none" stroke="#555" stroke-width="1.1"/><path d="M7.5 7.5 L11 11" stroke="#555" stroke-width="1.6"/></svg>
<div class="t" style="left:48px;top:542px">All Prefabs</div>
<svg style="left:4px;top:579px" width="9" height="8" viewBox="0 0 9 8"><path d="M0 0 H9 L4.5 7.5 Z" fill="#7a7a7a"/></svg>
<svg style="left:18px;top:577px" width="13" height="9" viewBox="0 0 13 9"><path d="M0 0 H4.5 L5.5 1.3 H11 V3 H3 L0.8 9 H0 Z" fill="#555"/><path d="M3.3 3.8 H13 L10.5 9 H1.3 Z" fill="#555"/></svg>
<div class="t b" style="left:35px;top:573px">Assets</div>
<svg style="left:32px;top:592px" width="12" height="10" viewBox="0 0 12 10"><path d="M0 0 H4.5 L5.5 1.3 H12 V10 H0 Z" fill="#555"/></svg>
<div class="t" style="left:48px;top:589px">Scenes</div>
<svg style="left:32px;top:608px" width="12" height="10" viewBox="0 0 12 10"><path d="M0 0 H4.5 L5.5 1.3 H12 V10 H0 Z" fill="#555"/></svg>
<div class="t" style="left:48px;top:605px">Scripts</div>
<svg style="left:5px;top:625px" width="7" height="9" viewBox="0 0 7 9"><path d="M0 0 V9 L7 4.5 Z" fill="#7a7a7a"/></svg>
<svg style="left:18px;top:624px" width="13" height="10" viewBox="0 0 13 10"><path d="M0 0 H4.5 L5.5 1.3 H13 V10 H0 Z" fill="#555"/></svg>
<div class="t b" style="left:35px;top:621px">Packages</div>
<!-- project grid -->
<div class="a" style="left:116px;top:494px;width:584px;height:20px;background:#cbcbcb"></div>
<div class="a" style="left:116px;top:514px;width:584px;height:1px;background:#aeaeae"></div>
<div class="a" style="left:116px;top:515px;width:584px;height:208px;background:#bfbfbf"></div>
<div class="t" style="left:120px;top:496px">Assets</div>
<svg style="left:164px;top:499px" width="6" height="9" viewBox="0 0 6 9"><path d="M0.8 0.8 L5 4.5 L0.8 8.2" fill="none" stroke="#8a8a8a" stroke-width="1.3"/></svg>
<div class="t b" style="left:175px;top:496px">Scripts</div>
<svg style="left:134px;top:524px" width="58" height="66" viewBox="0 0 58 66"><path d="M7.7 1.7 H42 L56.7 16.4 V58.5 A6 6 0 0 1 50.7 64.5 H7.7 A6 6 0 0 1 1.7 58.5 V7.7 A6 6 0 0 1 7.7 1.7 Z" fill="#a9a9a9"/><path d="M8.9 4.9 H40.7 L53 16.8 V57.3 A4 4 0 0 1 49 61.3 H8.9 A4 4 0 0 1 4.9 57.3 V8.9 A4 4 0 0 1 8.9 4.9 Z" fill="#fff"/><g fill="#2e7d32"><path d="M24.1 17.3 H28.7 L24.1 51.2 H19.6 Z"/><path d="M33.3 17.3 H37.6 L32.7 51.2 H28.1 Z"/><rect x="15.9" y="24.9" width="26.1" height="4.1"/><rect x="14.3" y="37" width="25.7" height="4.1"/></g></svg>
<div class="t" style="left:132px;top:591px;font-size:11px;letter-spacing:-0.15px;color:#222">CameraBe...</div>
<svg style="left:210px;top:524px" width="58" height="66" viewBox="0 0 58 66"><path d="M7.7 1.7 H42 L56.7 16.4 V58.5 A6 6 0 0 1 50.7 64.5 H7.7 A6 6 0 0 1 1.7 58.5 V7.7 A6 6 0 0 1 7.7 1.7 Z" fill="#a9a9a9"/><path d="M8.9 4.9 H40.7 L53 16.8 V57.3 A4 4 0 0 1 49 61.3 H8.9 A4 4 0 0 1 4.9 57.3 V8.9 A4 4 0 0 1 8.9 4.9 Z" fill="#fff"/><g fill="#2e7d32"><path d="M24.1 17.3 H28.7 L24.1 51.2 H19.6 Z"/><path d="M33.3 17.3 H37.6 L32.7 51.2 H28.1 Z"/><rect x="15.9" y="24.9" width="26.1" height="4.1"/><rect x="14.3" y="37" width="25.7" height="4.1"/></g></svg>
<div class="t" style="left:209px;top:591px;font-size:11px;letter-spacing:-0.15px;color:#222">PlayerBeh...</div>

<div class="a" style="left:116px;top:723px;width:584px;height:21px;background:#d1d1d1;border-top:1px solid #a8a8a8"></div>
<div class="a" style="left:629px;top:734px;width:55px;height:1px;background:#6a6a6a"></div>
<div class="a" style="left:655px;top:729px;width:11px;height:11px;border-radius:50%;background:#6a6a6a"></div>
<!-- inspector -->
<div class="a" style="left:702px;top:90px;width:314px;height:654px;background:#c6c6c6"></div>
<div class="a" style="left:1011px;top:90px;width:5px;height:654px;background:#c2c2c2;border-left:1px solid #b0b0b0"></div>
<svg style="left:1012px;top:95px" width="4" height="5" viewBox="0 0 4 5"><path d="M0 5 L4 0 V5 Z" fill="#555"/></svg>
<div class="a" style="left:1013px;top:222px;width:3px;height:502px;background:#a9a9a9;border-radius:3px 0 0 3px"></div>
<svg style="left:1013px;top:732px" width="3" height="5" viewBox="0 0 3 5"><path d="M0 0 H3 V4 Z" fill="#555"/></svg>
<div class="a" style="left:702px;top:100px;width:309px;height:20px;background:#cbcbcb"></div>
<div class="a" style="left:702px;top:99px;width:309px;height:1px;background:#999"></div>
<div class="a" style="left:702px;top:120px;width:309px;height:1px;background:#bababa"></div>
<svg style="left:708px;top:107px" width="9" height="8" viewBox="0 0 9 8"><path d="M0 0 H9 L4.5 7.5 Z" fill="#7a7a7a"/></svg>
<svg style="left:724px;top:106px" width="13" height="8" viewBox="0 0 13 8" fill="#1a6fd8"><rect x="0" y="0" width="8.2" height="8" rx="1"/><path d="M8.2 2.5 L12.3 0 V8 L8.2 5.5 Z"/></svg>
<div class="a" style="left:743px;top:104px;width:13px;height:13px;background:#f2f2f2;border:1px solid #b4b4b4;border-radius:2px"></div>
<svg style="left:745px;top:107px" width="9" height="8" viewBox="0 0 9 8"><path d="M0.8 4 L3.3 6.6 L8.3 1" fill="none" stroke="#222" stroke-width="1.4"/></svg>
<div class="t b" style="left:762px;top:103px;letter-spacing:0.15px">Camera</div>
<svg style="left:953px;top:105px" width="10" height="10" viewBox="0 0 10 10"><circle cx="5" cy="5" r="5" fill="#555"/><path d="M3.3 3.8 A1.8 1.8 0 1 1 5.6 5.4 Q5 5.7 5 6.5" fill="none" stroke="#cbcbcb" stroke-width="1.3"/><circle cx="5" cy="8" r="0.8" fill="#cbcbcb"/></svg>
<svg style="left:973px;top:105px" width="11" height="10" viewBox="0 0 11 10" fill="#555"><rect x="0" y="2.3" width="5" height="1.2"/><rect x="5" y="0" width="1.6" height="4.6"/><rect x="6.6" y="2.3" width="4.4" height="1.2"/><rect x="0" y="6.5" width="1.4" height="1.2"/><rect x="3.6" y="5.4" width="1.6" height="4.6"/><rect x="5.2" y="6.5" width="5.8" height="1.2"/></svg>
<svg style="left:997px;top:105px" width="3" height="10" viewBox="0 0 3 10" fill="#555"><rect x="0" y="0" width="2" height="2"/><rect x="0" y="3.8" width="2" height="2"/><rect x="0" y="7.6" width="2" height="2"/></svg>
<div class="t" style="left:721px;top:127px;">Clear Flags</div>
<div class="a" style="left:842px;top:125px;width:164px;height:17px;background:#e4e4e4;border:1px solid #b4b4b4;border-bottom-color:#999;border-radius:3px"></div>
<div class="t" style="left:846px;top:126px">Skybox</div>
<svg style="left:993px;top:132px" width="8" height="5" viewBox="0 0 8 5"><path d="M0 0 H8 L4 5 Z" fill="#444"/></svg>
<div class="t" style="left:721px;top:147px;">Background</div>
<div class="a" style="left:842px;top:145px;width:164px;height:17px;background:#dedede;border:1px solid #b4b4b4;border-bottom-color:#a4a4a4;border-radius:3px;overflow:hidden"><div class="a" style="left:0;top:0;width:145px;height:12px;background:#2e4b79"></div><div class="a" style="left:0;top:12px;width:145px;height:3px;background:#000"></div></div>
<svg style="left:991px;top:148px" width="12" height="12" viewBox="0 0 12 12"><path d="M1.5 10.5 L7 5" stroke="#555" stroke-width="1.5"/><path d="M6 3 L9 0.8 Q11.5 0.5 11.2 3 L9 6 Z" fill="#555"/><path d="M5.5 3.5 L8.5 6.5" stroke="#555" stroke-width="1.6"/></svg>
<div class="t" style="left:721px;top:167px;">Culling Mask</div>
<div class="a" style="left:842px;top:165px;width:164px;height:17px;background:#e4e4e4;border:1px solid #b4b4b4;border-bottom-color:#999;border-radius:3px"></div>
<div class="t" style="left:846px;top:166px">Everything</div>
<svg style="left:993px;top:172px" width="8" height="5" viewBox="0 0 8 5"><path d="M0 0 H8 L4 5 Z" fill="#444"/></svg>
<div class="t" style="left:721px;top:195px;">Projection</div>
<div class="a" style="left:842px;top:193px;width:164px;height:17px;background:#e4e4e4;border:1px solid #b4b4b4;border-bottom-color:#999;border-radius:3px"></div>
<div class="t" style="left:846px;top:194px">Perspective</div>
<svg style="left:993px;top:200px" width="8" height="5" viewBox="0 0 8 5"><path d="M0 0 H8 L4 5 Z" fill="#444"/></svg>
<div class="t" style="left:721px;top:215px;">FOV Axis</div>
<div class="a" style="left:842px;top:213px;width:164px;height:17px;background:#e4e4e4;border:1px solid #b4b4b4;border-bottom-color:#999;border-radius:3px"></div>
<div class="t" style="left:846px;top:214px">Vertical</div>
<svg style="left:993px;top:220px" width="8" height="5" viewBox="0 0 8 5"><path d="M0 0 H8 L4 5 Z" fill="#444"/></svg>
<div class="t" style="left:721px;top:235px;">Field of View</div>
<div class="a" style="left:842px;top:241px;width:110px;height:2px;background:#9a9a9a"></div>
<div class="a" style="left:875px;top:237px;width:11px;height:11px;border-radius:50%;background:#6b6b6b"></div>
<div class="a" style="left:956px;top:233px;width:50px;height:17px;background:#f0f0f0;border:1px solid #b4b4b4;border-bottom-color:#a4a4a4;border-radius:3px"></div>
<div class="t" style="left:960px;top:235px">60</div>
<div class="t" style="left:721px;top:255px;">Physical Camera</div>
<div class="a" style="left:843px;top:256px;width:13px;height:13px;background:#f2f2f2;border:1px solid #b4b4b4;border-radius:2px"></div>
<div class="t" style="left:721px;top:283px;">Clipping Planes</div>
<div class="t" style="left:843px;top:283px;">Near</div>
<div class="a" style="left:879px;top:281px;width:127px;height:17px;background:#f0f0f0;border:1px solid #b4b4b4;border-bottom-color:#a4a4a4;border-radius:3px"></div>
<div class="t" style="left:883px;top:283px">0.3</div>
<div class="t" style="left:843px;top:303px;">Far</div>
<div class="a" style="left:879px;top:301px;width:127px;height:17px;background:#f0f0f0;border:1px solid #b4b4b4;border-bottom-color:#a4a4a4;border-radius:3px"></div>
<div class="t" style="left:883px;top:303px">1000</div>
<div class="t" style="left:721px;top:323px;">Viewport Rect</div>
<div class="t" style="left:740px;top:343px;">X</div>
<div class="a" style="left:749px;top:341px;width:119px;height:17px;background:#f0f0f0;border:1px solid #b4b4b4;border-bottom-color:#a4a4a4;border-radius:3px"></div>
<div class="t" style="left:753px;top:343px">0</div>
<div class="t" style="left:878px;top:343px;">Y</div>
<div class="a" style="left:887px;top:341px;width:119px;height:17px;background:#f0f0f0;border:1px solid #b4b4b4;border-bottom-color:#a4a4a4;border-radius:3px"></div>
<div class="t" style="left:891px;top:343px">0</div>
<div class="t" style="left:737px;top:363px;">W</div>
<div class="a" style="left:749px;top:361px;width:119px;height:17px;background:#f0f0f0;border:1px solid #b4b4b4;border-bottom-color:#a4a4a4;border-radius:3px"></div>
<div class="t" style="left:753px;top:363px">1</div>
<div class="t" style="left:877px;top:363px;">H</div>
<div class="a" style="left:887px;top:361px;width:119px;height:17px;background:#f0f0f0;border:1px solid #b4b4b4;border-bottom-color:#a4a4a4;border-radius:3px"></div>
<div class="t" style="left:891px;top:363px">1</div>
<div class="t" style="left:721px;top:391px;">Depth</div>
<div class="a" style="left:842px;top:389px;width:164px;height:17px;background:#f0f0f0;border:1px solid #b4b4b4;border-bottom-color:#a4a4a4;border-radius:3px"></div>
<div class="t" style="left:846px;top:391px">-1</div>
<div class="t" style="left:721px;top:411px;">Rendering Path</div>
<div class="a" style="left:842px;top:409px;width:164px;height:17px;background:#e4e4e4;border:1px solid #b4b4b4;border-bottom-color:#999;border-radius:3px"></div>
<div class="t" style="left:846px;top:410px">Use Graphics Settings</div>
<svg style="left:993px;top:416px" width="8" height="5" viewBox="0 0 8 5"><path d="M0 0 H8 L4 5 Z" fill="#444"/></svg>
<div class="t" style="left:721px;top:431px;">Target Texture</div>
<div class="a" style="left:842px;top:429px;width:164px;height:17px;background:#f0f0f0;border:1px solid #b4b4b4;border-bottom-color:#a4a4a4;border-radius:3px;overflow:hidden"><div class="a" style="left:145px;top:0;width:18px;height:15px;background:#dedede"></div></div>
<div class="t" style="left:846px;top:431px;color:#090909">None (Render Texture)</div>
<svg style="left:991px;top:433px" width="10" height="10" viewBox="0 0 10 10"><circle cx="5" cy="5" r="4.2" fill="none" stroke="#555" stroke-width="1.1"/><circle cx="5" cy="5" r="1.6" fill="#555"/></svg>
<div class="t" style="left:721px;top:451px;">Occlusion Culling</div>
<div class="a" style="left:843px;top:452px;width:13px;height:13px;background:#f2f2f2;border:1px solid #b4b4b4;border-radius:2px"></div>
<svg style="left:845px;top:455px" width="9" height="8" viewBox="0 0 9 8"><path d="M0.8 4 L3.3 6.6 L8.3 1" fill="none" stroke="#222" stroke-width="1.4"/></svg>
<div class="t" style="left:721px;top:471px;">HDR</div>
<div class="a" style="left:842px;top:469px;width:164px;height:17px;background:#e4e4e4;border:1px solid #b4b4b4;border-bottom-color:#999;border-radius:3px"></div>
<div class="t" style="left:846px;top:470px">Use Graphics Settings</div>
<svg style="left:993px;top:476px" width="8" height="5" viewBox="0 0 8 5"><path d="M0 0 H8 L4 5 Z" fill="#444"/></svg>
<div class="t" style="left:721px;top:491px;">MSAA</div>
<div class="a" style="left:842px;top:489px;width:164px;height:17px;background:#e4e4e4;border:1px solid #b4b4b4;border-bottom-color:#999;border-radius:3px"></div>
<div class="t" style="left:846px;top:490px">Use Graphics Settings</div>
<svg style="left:993px;top:496px" width="8" height="5" viewBox="0 0 8 5"><path d="M0 0 H8 L4 5 Z" fill="#444"/></svg>
<div class="t" style="left:721px;top:511px;">Allow Dynamic Resol</div>
<div class="a" style="left:843px;top:512px;width:13px;height:13px;background:#f2f2f2;border:1px solid #b4b4b4;border-radius:2px"></div>
<div class="t" style="left:721px;top:539px;">Target Display</div>
<div class="a" style="left:842px;top:537px;width:164px;height:17px;background:#e4e4e4;border:1px solid #b4b4b4;border-bottom-color:#999;border-radius:3px"></div>
<div class="t" style="left:846px;top:538px">Display 1</div>
<svg style="left:993px;top:544px" width="8" height="5" viewBox="0 0 8 5"><path d="M0 0 H8 L4 5 Z" fill="#444"/></svg>
<div class="a" style="left:702px;top:565px;width:309px;height:21px;background:#cbcbcb"></div>
<div class="a" style="left:702px;top:564px;width:309px;height:1px;background:#999"></div>
<div class="a" style="left:702px;top:586px;width:309px;height:1px;background:#bababa"></div>
<svg style="left:723px;top:569px" width="14" height="13" viewBox="0 0 14 13"><path d="M1.8 10 V7 A5.2 5.2 0 0 1 12.2 7 V10" fill="none" stroke="#e0a010" stroke-width="1.6"/><rect x="0.5" y="7.5" width="3" height="5.3" rx="1" fill="#e0a010"/><rect x="10.5" y="7.5" width="3" height="5.3" rx="1" fill="#e0a010"/></svg>
<div class="a" style="left:743px;top:569px;width:13px;height:13px;background:#f2f2f2;border:1px solid #b4b4b4;border-radius:2px"></div>
<svg style="left:745px;top:572px" width="9" height="8" viewBox="0 0 9 8"><path d="M0.8 4 L3.3 6.6 L8.3 1" fill="none" stroke="#222" stroke-width="1.4"/></svg>
<div class="t b" style="left:762px;top:568px;letter-spacing:0.15px">Audio Listener</div>
<svg style="left:953px;top:570px" width="10" height="10" viewBox="0 0 10 10"><circle cx="5" cy="5" r="5" fill="#555"/><path d="M3.3 3.8 A1.8 1.8 0 1 1 5.6 5.4 Q5 5.7 5 6.5" fill="none" stroke="#cbcbcb" stroke-width="1.3"/><circle cx="5" cy="8" r="0.8" fill="#cbcbcb"/></svg>
<svg style="left:973px;top:570px" width="11" height="10" viewBox="0 0 11 10" fill="#555"><rect x="0" y="2.3" width="5" height="1.2"/><rect x="5" y="0" width="1.6" height="4.6"/><rect x="6.6" y="2.3" width="4.4" height="1.2"/><rect x="0" y="6.5" width="1.4" height="1.2"/><rect x="3.6" y="5.4" width="1.6" height="4.6"/><rect x="5.2" y="6.5" width="5.8" height="1.2"/></svg>
<svg style="left:997px;top:570px" width="3" height="10" viewBox="0 0 3 10" fill="#555"><rect x="0" y="0" width="2" height="2"/><rect x="0" y="3.8" width="2" height="2"/><rect x="0" y="7.6" width="2" height="2"/></svg>
<div class="a" style="left:702px;top:587px;width:309px;height:21px;background:#cbcbcb"></div>
<div class="a" style="left:702px;top:586px;width:309px;height:1px;background:#999"></div>
<div class="a" style="left:702px;top:608px;width:309px;height:1px;background:#bababa"></div>
<svg style="left:708px;top:594px" width="9" height="8" viewBox="0 0 9 8"><path d="M0 0 H9 L4.5 7.5 Z" fill="#7a7a7a"/></svg>
<svg style="left:723px;top:591px" width="14" height="14" viewBox="0 0 14 14"><path d="M1.5 0.5 H9.5 L13.5 4.5 V12.5 A1 1 0 0 1 12.5 13.5 H1.5 A1 1 0 0 1 0.5 12.5 V1.5 A1 1 0 0 1 1.5 0.5 Z" fill="#fff" stroke="#b0b0b0"/><g fill="#2e7d32"><path d="M5 3.5 H6.3 L5.3 11 H4 Z"/><path d="M8.2 3.5 H9.5 L8.5 11 H7.2 Z"/><rect x="3.8" y="5.3" width="6" height="1.2"/><rect x="3.2" y="8.3" width="6" height="1.2"/></g></svg>
<div class="a" style="left:743px;top:591px;width:13px;height:13px;background:#f2f2f2;border:1px solid #b4b4b4;border-radius:2px"></div>
<svg style="left:745px;top:594px" width="9" height="8" viewBox="0 0 9 8"><path d="M0.8 4 L3.3 6.6 L8.3 1" fill="none" stroke="#222" stroke-width="1.4"/></svg>
<div class="t b" style="left:762px;top:590px;letter-spacing:0.15px">Camera Behaviour (Script)</div>
<svg style="left:953px;top:592px" width="10" height="10" viewBox="0 0 10 10"><circle cx="5" cy="5" r="5" fill="#555"/><path d="M3.3 3.8 A1.8 1.8 0 1 1 5.6 5.4 Q5 5.7 5 6.5" fill="none" stroke="#cbcbcb" stroke-width="1.3"/><circle cx="5" cy="8" r="0.8" fill="#cbcbcb"/></svg>
<svg style="left:973px;top:592px" width="11" height="10" viewBox="0 0 11 10" fill="#555"><rect x="0" y="2.3" width="5" height="1.2"/><rect x="5" y="0" width="1.6" height="4.6"/><rect x="6.6" y="2.3" width="4.4" height="1.2"/><rect x="0" y="6.5" width="1.4" height="1.2"/><rect x="3.6" y="5.4" width="1.6" height="4.6"/><rect x="5.2" y="6.5" width="5.8" height="1.2"/></svg>
<svg style="left:997px;top:592px" width="3" height="10" viewBox="0 0 3 10" fill="#555"><rect x="0" y="0" width="2" height="2"/><rect x="0" y="3.8" width="2" height="2"/><rect x="0" y="7.6" width="2" height="2"/></svg>
<div class="t" style="left:721px;top:614px;color:#7d7d7d">Script</div>
<div class="a" style="left:842px;top:612px;width:164px;height:17px;background:#d6d6d6;border:1px solid #b4b4b4;border-bottom-color:#a4a4a4;border-radius:3px;overflow:hidden"><div class="a" style="left:145px;top:0;width:18px;height:15px;background:#d6d6d6"></div></div>
<svg style="left:846px;top:616px" width="9" height="11" viewBox="0 0 9 11"><path d="M0.5 0.5 H6 L8.5 3 V10.5 H0.5 Z" fill="#f4f4f4" stroke="#b8b8b8" stroke-width="0.8"/><g fill="#7aa87c"><rect x="2.8" y="2.5" width="0.9" height="6.5"/><rect x="5" y="2.5" width="0.9" height="6.5"/><rect x="1.8" y="4" width="5" height="0.9"/><rect x="1.8" y="6.5" width="5" height="0.9"/></g></svg>
<div class="t" style="left:858px;top:614px;color:#7d7d7d">CameraBehaviour</div>
<svg style="left:991px;top:616px" width="10" height="10" viewBox="0 0 10 10"><circle cx="5" cy="5" r="4.2" fill="none" stroke="#9a9a9a" stroke-width="1.1"/><circle cx="5" cy="5" r="1.6" fill="#9a9a9a"/></svg>
<div class="t" style="left:721px;top:634px;color:#1b4fa5">Target</div>
<div class="a" style="left:842px;top:632px;width:164px;height:17px;background:#f0f0f0;border:1px solid #b4b4b4;border-bottom-color:#a4a4a4;border-radius:3px;overflow:hidden"><div class="a" style="left:145px;top:0;width:18px;height:15px;background:#dedede"></div></div>
<svg style="left:846px;top:636px" width="10" height="10" viewBox="0 0 10 10"><path d="M5 5 V0.5" stroke="#5aa02c" stroke-width="1.6"/><path d="M5 5 L0.8 8.5" stroke="#d83a1a" stroke-width="1.6"/><path d="M5 5 L9.2 8.5" stroke="#2a6ad8" stroke-width="1.6"/></svg>
<div class="t" style="left:858px;top:634px;color:#090909">Player (Transform)</div>
<svg style="left:991px;top:636px" width="10" height="10" viewBox="0 0 10 10"><circle cx="5" cy="5" r="4.2" fill="none" stroke="#555" stroke-width="1.1"/><circle cx="5" cy="5" r="1.6" fill="#555"/></svg>
<div class="t" style="left:721px;top:654px;">Offset</div>
<div class="t" style="left:737px;top:674px;">X</div>
<div class="a" style="left:747px;top:672px;width:75px;height:17px;background:#f0f0f0;border:1px solid #b4b4b4;border-bottom-color:#a4a4a4;border-radius:3px"></div>
<div class="t" style="left:751px;top:674px">0</div>
<div class="t" style="left:828px;top:674px;">Y</div>
<div class="a" style="left:838px;top:672px;width:76px;height:17px;background:#f0f0f0;border:1px solid #b4b4b4;border-bottom-color:#a4a4a4;border-radius:3px"></div>
<div class="t" style="left:842px;top:674px">3</div>
<div class="t" style="left:920px;top:674px;">Z</div>
<div class="a" style="left:930px;top:672px;width:76px;height:17px;background:#f0f0f0;border:1px solid #b4b4b4;border-bottom-color:#a4a4a4;border-radius:3px"></div>
<div class="t" style="left:934px;top:674px">-6</div>
<div class="a" style="left:702px;top:699px;width:309px;height:1px;background:#999"></div>
<div class="a" style="left:743px;top:709px;width:228px;height:22px;background:#e4e4e4;border:1px solid #a9a9a9;border-bottom-color:#959595;border-radius:3px"></div>
<div class="t" style="left:743px;top:712px;width:228px;text-align:center">Add Component</div>
<!-- /inspector -->
<!-- separators -->
<div class="a" style="left:234px;top:71px;width:2px;height:383px;background:#8a8a8a"></div>
<div class="a" style="left:700px;top:71px;width:2px;height:673px;background:#8a8a8a"></div>
<div class="a" style="left:0;top:452px;width:700px;height:2px;background:#8a8a8a"></div>
<!-- status bar -->
<div class="a" style="left:0;top:744px;width:1016px;height:19px;background:#8a8a8a"></div>

<!-- status bar icons -->
<div class="a" style="left:920px;top:747px;width:1px;height:16px;background:#7a7a7a"></div>
<svg style="left:924px;top:749px" width="15" height="15" viewBox="0 0 15 15" fill="#5c5c5c"><ellipse cx="7.5" cy="9" rx="4.2" ry="5.2"/><circle cx="7.5" cy="3.5" r="2.5"/><path d="M1 5 L4 7 M14 5 L11 7 M0.5 9.5 H3.5 M14.5 9.5 H11.5 M1 14 L4 12 M14 14 L11 12" stroke="#5c5c5c" stroke-width="1.2"/><path d="M1.5 1.5 L13.5 13.5" stroke="#8a8a8a" stroke-width="2.2"/><path d="M1.5 1.5 L13.5 13.5" stroke="#5c5c5c" stroke-width="1"/></svg>
<div class="a" style="left:945px;top:747px;width:1px;height:16px;background:#7a7a7a"></div>
<svg style="left:951px;top:749px" width="14" height="15" viewBox="0 0 14 15" fill="#5c5c5c"><ellipse cx="7" cy="2.8" rx="6" ry="2.5"/><path d="M1 4.5 Q7 8 13 4.5 V7 Q7 10.5 1 7 Z"/><path d="M1 8.5 Q7 12 13 8.5 V11 Q7 14.5 1 11 Z"/><path d="M1 1 L12 14" stroke="#8a8a8a" stroke-width="2"/><path d="M1 1 L12 14" stroke="#5c5c5c" stroke-width="0.9"/></svg>
<div class="a" style="left:971px;top:747px;width:1px;height:16px;background:#7a7a7a"></div>
<svg style="left:977px;top:749px" width="15" height="15" viewBox="0 0 15 15"><circle cx="7.5" cy="7.5" r="5.5" fill="none" stroke="#5c5c5c" stroke-width="1.3" stroke-dasharray="3 1.5"/><path d="M7.5 4 V11 M4 7.5 H11" stroke="#5c5c5c" stroke-width="1.3"/><path d="M1.5 1.5 L13.5 13.5" stroke="#5c5c5c" stroke-width="1.3"/></svg>
<div class="a" style="left:997px;top:747px;width:1px;height:16px;background:#7a7a7a"></div>
<svg style="left:1003px;top:749px" width="15" height="15" viewBox="0 0 15 15"><circle cx="7.5" cy="7.5" r="6" fill="none" stroke="#5c5c5c" stroke-width="1.3"/><path d="M4.5 7.5 L6.8 9.8 L10.8 5.3" fill="none" stroke="#5c5c5c" stroke-width="1.3"/></svg>
</body></html>
